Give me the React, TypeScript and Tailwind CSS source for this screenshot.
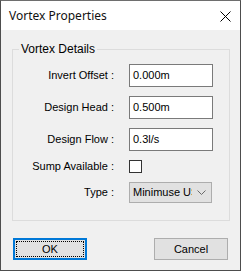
import React from "react";

const labelFont = { fontFamily: '"Liberation Sans", Arial, sans-serif' };

function Row({ label, children, h }: { label: string; children: React.ReactNode; h: string }) {
  return (
    <div className={`flex items-center ${h}`}>
      <div className="w-[102px] text-right text-[11px] text-black leading-none pr-[1px]">{label}</div>
      <div className="ml-[14px] flex items-center">{children}</div>
    </div>
  );
}

function TextBox({ value }: { value: string }) {
  return (
    <div className="w-[84px] h-[23px] bg-white border border-[#7a7a7a] flex items-center pl-[3px] text-[11px] text-black leading-none">
      {value}
    </div>
  );
}

export default function App() {
  return (
    <div
      className="w-[241px] h-[271px] bg-[#f0f0f0] border border-[#4d4d4d] border-t-[#6e6e6e] flex flex-col overflow-hidden"
      style={labelFont}
    >
      <div className="h-[29px] bg-white flex items-center justify-between pl-[8px] pr-[9px] shrink-0">
        <span className="text-[12px] text-[#111]" style={{ fontFamily: '"Noto Sans", "Segoe UI", sans-serif' }}>
          Vortex Properties
        </span>
        <svg width="11" height="11" viewBox="0 0 11 11" className="mt-[1px]">
          <path d="M0.5 0.5 L10.5 10.5 M10.5 0.5 L0.5 10.5" stroke="#000" strokeWidth="1" fill="none" />
        </svg>
      </div>

      <fieldset className="ml-[11px] w-[218px] mt-[12px] border border-[#dcdcdc] pb-[17px] pt-[8px] shrink-0">
        <legend className="ml-[6px] px-[2px] text-[12px] leading-[14px] text-black">Vortex Details</legend>
        <div className="flex flex-col gap-[9px]">
          <Row label="Invert Offset :" h="h-[23px]">
            <TextBox value="0.000m" />
          </Row>
          <Row label="Design Head :" h="h-[23px]">
            <TextBox value="0.500m" />
          </Row>
          <Row label="Design Flow :" h="h-[23px]">
            <TextBox value="0.3l/s" />
          </Row>
          <Row label="Sump Available :" h="h-[13px]">
            <div className="w-[13px] h-[13px] bg-white border border-[#333333]" />
          </Row>
          <Row label="Type :" h="h-[21px]">
            <div className="w-[83px] h-[21px] bg-[#e1e1e1] border border-[#adadad] flex items-center pl-[3px] pr-[5px] text-[11px] text-black leading-none">
              <span className="w-[59px] overflow-hidden whitespace-nowrap">Minimuse US</span>
              <svg width="9" height="5" viewBox="0 0 9 5" className="ml-auto">
                <path d="M0.5 0.5 L4.5 4.5 L8.5 0.5" stroke="#6a6a6a" strokeWidth="1" fill="none" />
              </svg>
            </div>
          </Row>
        </div>
      </fieldset>

      <div className="flex justify-between ml-[12px] mr-[12px] mt-[17px]">
        <button className="w-[74px] h-[22px] bg-[#e1e1e1] border-2 border-[#0078d7] p-[1px] text-[11px] text-black">
          <div className="w-full h-full border border-dotted border-[#000] flex items-center justify-center leading-none">
            OK
          </div>
        </button>
        <button className="w-[74px] h-[22px] bg-[#e1e1e1] border border-[#adadad] flex items-center justify-center text-[11px] text-black leading-none">
          Cancel
        </button>
      </div>
    </div>
  );
}
